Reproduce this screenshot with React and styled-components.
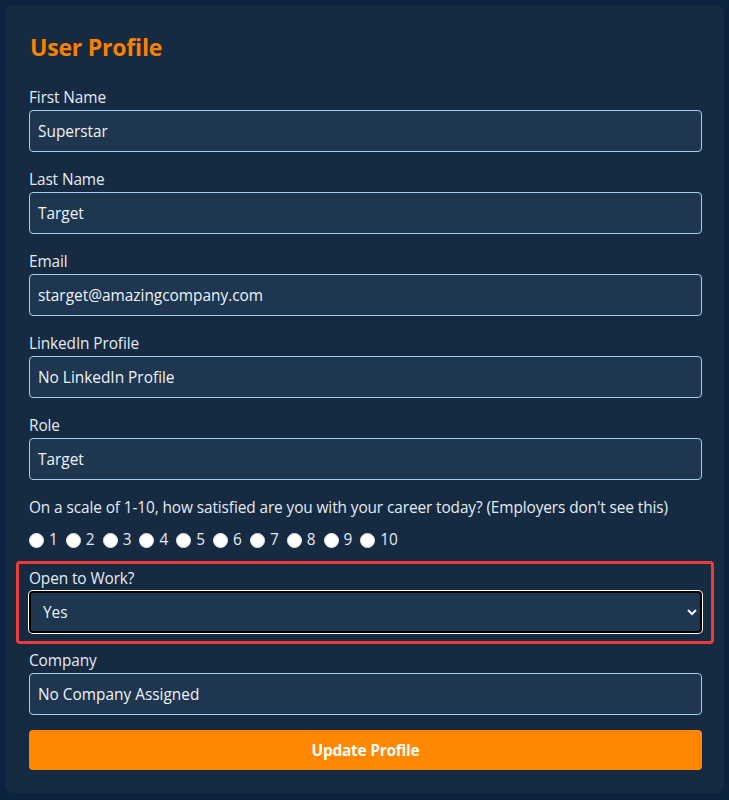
import React from "react";
import styled, { createGlobalStyle } from "styled-components";

const Global = createGlobalStyle`
  html, body { margin: 0; padding: 0; background: #0c2340; }
  body { font-family: "Open Sans", "Noto Sans", sans-serif; }
  * { box-sizing: border-box; }
`;

const Page = styled.div`
  padding: 5px 5px 7px 5px;
  min-height: 800px;
`;

const Card = styled.form`
  background: #162a42;
  border-radius: 8px;
  padding: 24px 22px 23px 24px;
  display: flex;
  flex-direction: column;
`;

const Title = styled.h1`
  margin: 6px 0 28px 1px;
  color: #ff8000;
  font-size: 23px;
  font-weight: 700;
  line-height: 24px;
  letter-spacing: -0.2px;
`;

const Field = styled.div`
  display: flex;
  flex-direction: column;
  gap: 1px;
  margin-bottom: ${(p) => p.$mb ?? 17}px;
`;

const Highlight = styled.div`
  display: flex;
  flex-direction: column;
  gap: 1px;
  margin: 0 -12px 6px -13px;
  padding: 4px 9px 8px 10px;
  border: 3px solid #ef3b3b;
  border-radius: 4px;
`;

const Label = styled.label`
  color: #e4ecf4;
  font-size: 15.4px;
  line-height: 22px;
  letter-spacing: -0.1px;
`;

const Input = styled.input`
  height: 42px;
  width: 100%;
  background: #1e3650;
  border: 1px solid #a3d0f0;
  border-radius: 4px;
  color: #eef3f8;
  font-family: inherit;
  font-size: 15.4px;
  padding: 0 8px;
  outline: none;
`;

const Select = styled.select`
  height: 42px;
  width: 100%;
  background: #1e3650;
  border: 2px solid #000;
  box-shadow: 0 0 0 1px #ffffff;
  border-radius: 4px;
  color: #eef3f8;
  font-family: inherit;
  font-size: 15.4px;
  padding: 0 8px;
  outline: none;
`;

const Question = styled.div`
  color: #e4ecf4;
  font-size: 15.4px;
  line-height: 22px;
  letter-spacing: -0.1px;
  margin: 0 0 10px 0;
`;

const RadioRow = styled.div`
  display: flex;
  align-items: center;
  height: 22px;
  margin: 0 0 10px 0;
`;

const RadioItem = styled.label`
  display: inline-flex;
  align-items: center;
  color: #e4ecf4;
  font-size: 15.4px;
  line-height: 22px;
  margin-right: 8px;
`;

const Radio = styled.input.attrs({ type: "radio" })`
  appearance: none;
  -webkit-appearance: none;
  margin: 0 5px 0 0;
  width: 15px;
  height: 15px;
  border-radius: 50%;
  background: #ffffff;
  border: 1px solid #e6e6e6;
`;

const Button = styled.button`
  height: 40px;
  width: 100%;
  background: #ff8800;
  color: #ffffff;
  border: none;
  border-radius: 4px;
  font-family: inherit;
  font-weight: 700;
  font-size: 15.4px;
  letter-spacing: -0.2px;
`;

const fields = [
  ["First Name", "Superstar"],
  ["Last Name", "Target"],
  ["Email", "starget@amazingcompany.com"],
  ["LinkedIn Profile", "No LinkedIn Profile"],
  ["Role", "Target"],
];

export default function App() {
  return (
    <>
      <Global />
      <Page>
        <Card onSubmit={(e) => e.preventDefault()}>
          <Title>User Profile</Title>
          {fields.map(([l, v]) => (
            <Field key={l}>
              <Label>{l}</Label>
              <Input defaultValue={v} />
            </Field>
          ))}
          <Question>
            On a scale of 1-10, how satisfied are you with your career today? (Employers don't see this)
          </Question>
          <RadioRow>
            {Array.from({ length: 10 }, (_, i) => (
              <RadioItem key={i}>
                <Radio name="sat" value={i + 1} />
                {i + 1}
              </RadioItem>
            ))}
          </RadioRow>
          <Highlight>
            <Label>Open to Work?</Label>
            <Select defaultValue="Yes">
              <option>Yes</option>
              <option>No</option>
            </Select>
          </Highlight>
          <Field $mb={15}>
            <Label>Company</Label>
            <Input defaultValue="No Company Assigned" />
          </Field>
          <Button type="submit">Update Profile</Button>
        </Card>
      </Page>
    </>
  );
}
